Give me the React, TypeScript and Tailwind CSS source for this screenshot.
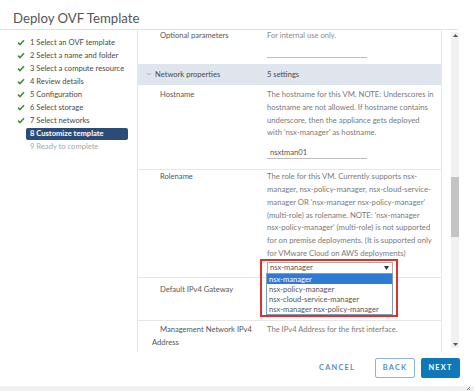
import React from 'react';

const steps = [
  '1 Select an OVF template',
  '2 Select a name and folder',
  '3 Select a compute resource',
  '4 Review details',
  '5 Configuration',
  '6 Select storage',
  '7 Select networks',
];

const hostnameHelp = [
  'The hostname for this VM. NOTE: Underscores in',
  'hostname are not allowed. If hostname contains',
  'underscore, then the appliance gets deployed',
  "with 'nsx-manager' as hostname.",
];

const rolenameHelp = [
  'The role for this VM. Currently supports nsx-',
  'manager, nsx-policy-manager, nsx-cloud-service-',
  "manager OR 'nsx-manager nsx-policy-manager'",
  "(multi-role) as rolename. NOTE: 'nsx-manager",
  "nsx-policy-manager' (multi-role) is not supported",
  'for on premise deployments. (It is supported only',
  'for VMware Cloud on AWS deployments)',
];

const roles = [
  'nsx-manager',
  'nsx-policy-manager',
  'nsx-cloud-service-manager',
  'nsx-manager nsx-policy-manager',
];

function Check() {
  return (
    <svg width="8" height="7" viewBox="0 0 8 7" className="shrink-0">
      <path d="M1 3.6 L3 5.6 L7 1.2" fill="none" stroke="#3f8f3a" strokeWidth="1.6" />
    </svg>
  );
}

function Lines({ lines }: { lines: string[] }) {
  return (
    <div className="text-[7.7px] leading-[12.8px] text-[#7a7a7a]">
      {lines.map((l) => (
        <div key={l} className="whitespace-nowrap">
          {l}
        </div>
      ))}
    </div>
  );
}

export default function App() {
  return (
    <div className="w-[474px] h-[391px] bg-white flex flex-col overflow-hidden font-['Lato','Liberation_Sans',sans-serif] text-[#565656]">
      <div className="h-[30px] shrink-0 mr-[16px] border-b border-[#e2e2e2] pl-[13px] pt-[8px]">
        <h1 className="text-[13.2px] leading-[20px] text-[#555]">Deploy OVF Template</h1>
      </div>

      <div className="flex h-[322px] shrink-0">
        <div className="w-[138px] shrink-0 border-r border-[#e6e6e6] pt-[6px] pl-[17px] text-[7.6px] text-[#4a4a4a]">
          {steps.map((s) => (
            <div key={s} className="flex items-center h-[13px] gap-[5px]">
              <Check />
              <span className="whitespace-nowrap">{s}</span>
            </div>
          ))}
          <div className="h-[13px] flex items-center">
            <div className="ml-[9px] w-[102px] h-[12px] rounded-[2px] bg-[#2c4c78] pl-[4px] flex items-center text-white font-bold">
              8 Customize template
            </div>
          </div>
          <div className="h-[13px] flex items-center pl-[13px] text-[#a8a8a8]">9 Ready to complete</div>
        </div>

        <div className="flex flex-1">
          <div className="w-[304px] shrink-0 border-r border-[#e8e8e8] relative text-[7.6px]">
            {/* Optional parameters */}
            <div className="flex h-[34px]">
              <div className="w-[129px] shrink-0 pl-[22px] leading-[10px] text-[#555]">Optional parameters</div>
              <div className="flex-1 flex flex-col">
                <div className="leading-[10px] text-[#8a8a8a]">For internal use only.</div>
                <div className="mt-[17px] w-[100px] border-b border-[#bdbdbd]" />
              </div>
            </div>

            {/* Network properties band */}
            <div className="flex items-center h-[21px] bg-[#dfe5ec] text-[#4a4a4a]">
              <div className="w-[129px] shrink-0 flex items-center pl-[8px] gap-[4px]">
                <svg width="5" height="4" viewBox="0 0 5 4">
                  <path d="M0.5 1 L2.5 3 L4.5 1" fill="none" stroke="#9aa3ad" strokeWidth="0.8" />
                </svg>
                <span>Network properties</span>
              </div>
              <div>5 settings</div>
            </div>

            {/* Hostname */}
            <div className="flex pt-[3px] pb-[10px] border-b border-[#e6e6e6]">
              <div className="w-[129px] shrink-0 pl-[22px] leading-[12.8px] text-[#555]">Hostname</div>
              <div className="flex-1">
                <Lines lines={hostnameHelp} />
                <div className="mt-[7px] w-[100px] h-[13px] border-b border-[#bdbdbd] pl-[3px] leading-[12px] text-[#555]">
                  nsxtman01
                </div>
              </div>
            </div>

            {/* Rolename */}
            <div className="flex pb-[3px] border-b border-[#e6e6e6]">
              <div className="w-[129px] shrink-0 pl-[22px] leading-[12.8px] text-[#555]">Rolename</div>
              <div className="flex-1">
                <Lines lines={rolenameHelp} />
                <div className="mt-[2px] w-[126px] h-[12px] border border-[#a9a9a9] flex items-center justify-between pl-[2px] pr-[3px] text-[#555]">
                  <span>nsx-manager</span>
                  <svg width="5" height="4" viewBox="0 0 5 4">
                    <path d="M0 0 H5 L2.5 4 Z" fill="#333" />
                  </svg>
                </div>
              </div>
            </div>

            {/* Default IPv4 Gateway */}
            <div className="flex h-[43px] pt-[5px] border-b border-[#e6e6e6]">
              <div className="w-[129px] shrink-0 pl-[22px] leading-[12.8px] text-[#555]">Default IPv4 Gateway</div>
            </div>

            {/* Management Network IPv4 Address */}
            <div className="flex pt-[2px]">
              <div className="w-[129px] shrink-0 pl-[14px] indent-[8px] leading-[12.8px] text-[#555]">
                Management Network IPv4 Address
              </div>
              <div className="flex-1 leading-[12.8px] text-[#7a7a7a] whitespace-nowrap">
                The IPv4 Address for the first interface.
              </div>
            </div>

            {/* open dropdown list */}
            <div className="absolute left-[128px] top-[243px] w-[127px] border border-[#7f9db9] bg-white text-[#555] leading-[10px]">
              {roles.map((r, i) => (
                <div key={r} className={i === 0 ? 'pl-[2px] bg-[#2e7bd6] text-white' : 'pl-[2px]'}>
                  {r}
                </div>
              ))}
            </div>

            {/* annotation box */}
            <div className="absolute left-[122px] top-[229px] w-[138px] h-[58px] border-2 border-[#e0302c]" />
          </div>

          <div className="flex-1 pl-[9px] pt-[2px] pb-[4px]">
            <div className="w-[8px] h-full bg-[#f1f1f1] flex flex-col items-center justify-between py-[2px]">
              <svg width="5" height="3" viewBox="0 0 5 3">
                <path d="M0 3 H5 L2.5 0 Z" fill="#555" />
              </svg>
              <div className="flex-1 w-full flex flex-col pt-[140px]">
                <div className="h-[60px] w-full bg-[#c4c4c4]" />
              </div>
              <svg width="5" height="3" viewBox="0 0 5 3">
                <path d="M0 0 H5 L2.5 3 Z" fill="#555" />
              </svg>
            </div>
          </div>
        </div>
      </div>

      <div className="flex-1 flex items-center justify-end gap-[6px] pr-[14px] pb-[3px] text-[7.4px] font-bold tracking-[1.2px]">
        <button className="h-[20px] px-[8px] text-[#5a8fba] mr-[6px]">CANCEL</button>
        <button className="h-[20px] w-[40px] border border-[#8ab6d8] rounded-[2px] text-[#5a8fba]">BACK</button>
        <button className="h-[20px] w-[39px] rounded-[2px] bg-[#0f78b8] text-white">NEXT</button>
      </div>
      <div className="h-[5px] shrink-0 bg-[#f0f0f0] flex justify-end pr-[3px]">
        <svg width="5" height="5" viewBox="0 0 5 5">
          <path d="M1 4 L4 1 M3 4 L4 3" stroke="#555" strokeWidth="0.8" />
        </svg>
      </div>
    </div>
  );
}
